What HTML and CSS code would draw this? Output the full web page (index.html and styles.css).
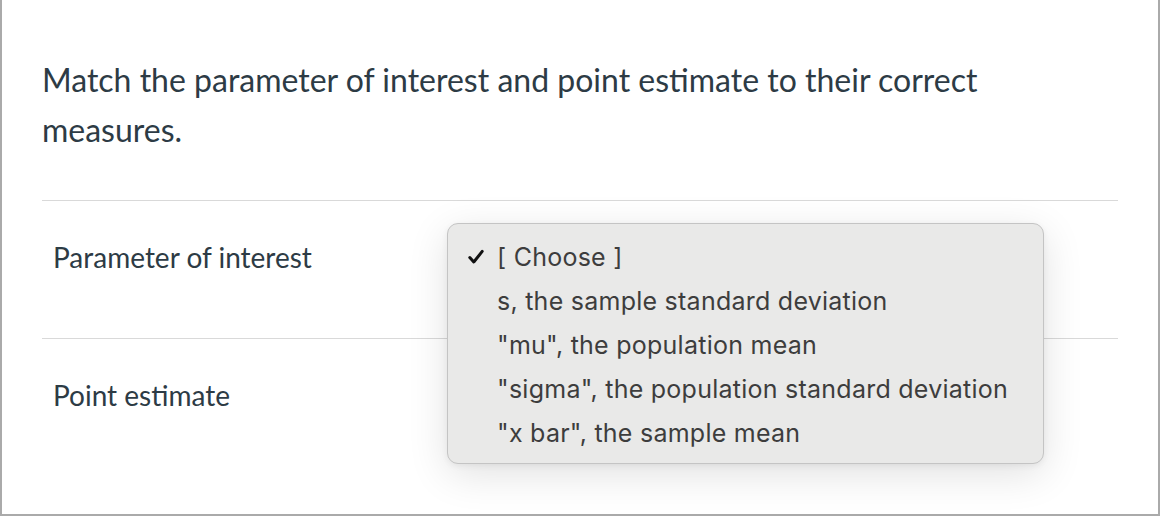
FILE: index.html
```html
<!DOCTYPE html>
<html>
<head>
<meta charset="utf-8">
<link rel="stylesheet" href="styles.css">
</head>
<body>
<div class="frame">
  <div class="question">Match the parameter of interest and point estimate to their correct measures.</div>
  <div class="answers">
    <div class="row"><span class="label">Parameter of interest</span></div>
    <div class="row"><span class="label">Point estimate</span></div>
  </div>
  <div class="menu">
    <div class="item checked"><svg class="check" viewBox="0 0 16 16" width="16" height="16"><path d="M1.8 8.6 L5.8 13 L14.2 2.4" fill="none" stroke="#111" stroke-width="3" stroke-linecap="round" stroke-linejoin="round"/></svg><span>[ Choose ]</span></div>
    <div class="item"><span>s, the sample standard deviation</span></div>
    <div class="item"><span>"mu", the population mean</span></div>
    <div class="item"><span>"sigma", the population standard deviation</span></div>
    <div class="item"><span>"x bar", the sample mean</span></div>
  </div>
</div>
</body>
</html>
```
FILE: styles.css
```css
html, body {
  margin: 0;
  padding: 0;
  background: #fff;
}
.frame {
  position: relative;
  box-sizing: border-box;
  width: 1160px;
  height: 516px;
  border: 2px solid #aaaaaa;
  border-top: none;
  padding: 55px 40px 0 40px;
  font-family: Lato, "Noto Sans", sans-serif;
  color: #2d3b45;
}
.question {
  font-size: 32px;
  line-height: 50px;
  padding-right: 100px;
}
.answers {
  margin-top: 45px;
}
.row {
  box-sizing: border-box;
  height: 138px;
  border-top: 1px solid #d9d9d9;
  padding: 41px 11px 0 11px;
}
.label {
  display: block;
  font-size: 28px;
  line-height: 30px;
}
.menu {
  position: absolute;
  left: 445px;
  top: 223px;
  width: 597px;
  height: 241px;
  box-sizing: border-box;
  background: #e9e9e8;
  border: 1px solid #c4c4c4;
  border-radius: 11px;
  box-shadow: 0 10px 40px rgba(0, 0, 0, 0.12), 0 2px 6px rgba(0,0,0,0.06);
  padding: 11px 0 0 0;
  font-family: Inter, "Noto Sans", sans-serif;
  color: #3d3d3d;
}
.item {
  position: relative;
  height: 44px;
  display: flex;
  align-items: center;
  padding-left: 49px;
  font-size: 25px;
  letter-spacing: 0.25px;
}
.check {
  position: absolute;
  left: 20px;
  top: 14px;
}
```
